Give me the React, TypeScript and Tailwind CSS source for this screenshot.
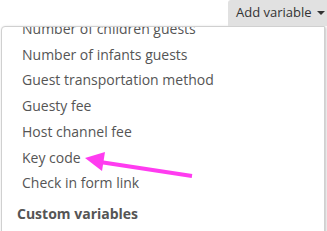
const items = [
  'Number of children guests',
  'Number of infants guests',
  'Guest transportation method',
  'Guesty fee',
  'Host channel fee',
  'Key code',
  'Check in form link',
];

export default function App() {
  return (
    <div
      className="relative w-[327px] h-[231px] overflow-hidden bg-white"
      style={{ fontFamily: '"Open Sans", sans-serif' }}
    >
      {/* Toolbar */}
      <div className="flex justify-end h-[26px]">
        <button className="flex items-center gap-[5px] w-[102px] h-[26px] pl-[8px] -mr-[3px] bg-[#e1e1e1] rounded-t-[3px] text-[13px] text-[#333] whitespace-nowrap">
          Add variable
          <span className="w-0 h-0 border-l-[4px] border-r-[4px] border-t-[4px] border-l-transparent border-r-transparent border-t-[#333]" />
        </button>
      </div>

      {/* Dropdown menu */}
      <div className="ml-[1px] mr-[2px] h-[210px] overflow-hidden bg-white border border-[#d0d0d0] rounded-tl-[4px] shadow-[1px_1px_3px_rgba(0,0,0,0.25)]">
        <ul className="-mt-[11px] text-[14px] text-[#555]">
          {items.map(item => (
            <li key={item} className="pl-[20px] leading-[25.7px] whitespace-nowrap">
              {item}
            </li>
          ))}
        </ul>
        <p className="mt-[8px] pl-[15px] leading-[20px] text-[14px] font-bold text-[#555]">
          Custom variables
        </p>
      </div>

      {/* Annotation arrow */}
      <svg className="absolute left-0 top-0" width="327" height="231">
        <line x1="100" y1="162" x2="192" y2="176" stroke="#ff3cf0" strokeWidth="4" />
        <polygon points="85,158 105,152 102,171" fill="#ff3cf0" />
      </svg>
    </div>
  );
}
